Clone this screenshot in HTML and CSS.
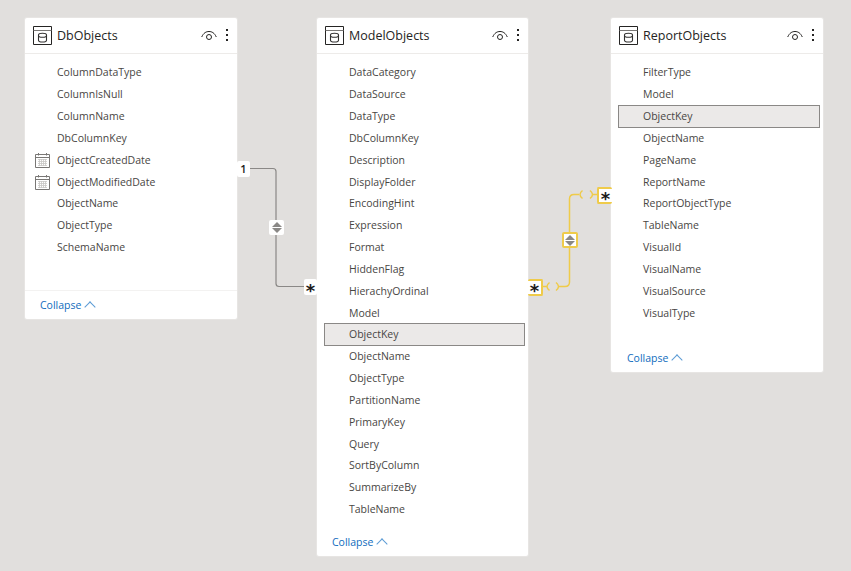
FILE: index.html
```html
<!DOCTYPE html>
<html lang="en">
<head>
    <meta charset="UTF-8">
    <title>Model view</title>
    <link rel="stylesheet" href="styles.css">
</head>
<body>
    <svg width="0" height="0" class="defs">
        <defs>
            <symbol id="tableIcon" viewBox="0 0 20 19">
                <path d="M.5.5h18v18H.5z" fill="none" stroke="#252423"/>
                <path d="M.5 4.500h18" fill="none" stroke="#797775"/>
                <path d="M5.500 9c0-1.200 1.600-1.800 4-1.800s4 .6 4 1.800v5.200c0 1.200-1.600 1.800-4 1.800s-4-.6-4-1.800zM5.500 9.500c0 1.200 1.600 1.800 4 1.800s4-.6 4-1.800" fill="none" stroke="#323130" stroke-width="1.100"/>
            </symbol>
            <symbol id="eyeIcon" viewBox="0 0 16 11">
                <path d="M.7 7C2.500 3 5 1.500 8 1.500S13.500 3 15.300 7" fill="none" stroke="#252423"/>
                <circle cx="8" cy="7" r="2.500" fill="none" stroke="#252423"/>
            </symbol>
            <symbol id="dateIcon" viewBox="0 0 15 15">
                <path d="M.5 1.500h14v13H.5zM.5 4.500h14M3.500 0v2.500M11.500 0v2.500" fill="none" stroke="#797775"/>
                <path d="M3 6.500h9M3 8.500h9M3 10.500h9M3 12.500h9M4.500 6v7M6.500 6v7M8.500 6v7M10.500 6v7" fill="none" stroke="#c8c6c4" stroke-width=".8"/>
            </symbol>
        </defs>
    </svg>

    <div class="canvas">
        <svg class="links" width="851" height="571">
            <path class="link" d="M250 168.500h23q3 0 3 3v112q0 3 3 3h26"/>
            <path class="link link-on" d="M543 286.500h4M558 286.500h7q4.500 0 4.500-4.500V199q0-4.500 4.500-4.500h5M592 194.500h6"/>
            <path class="link link-on" d="M549.500 282.500q-5 4 0 8M556 282.500q5 4 0 8M582.500 190.500q-5 4 0 8M590 190.500q5 4 0 8"/>
        </svg>

        <span class="tag tag-one">1</span>
        <span class="tag tag-star tag-many-a">*</span>
        <span class="tag tag-star tag-on tag-many-b">*</span>
        <span class="tag tag-star tag-on tag-many-c">*</span>
        <span class="filter"><i class="up"></i><i class="down"></i></span>
        <span class="filter filter-on"><i class="up"></i><i class="down"></i></span>

        <section class="card card-db">
            <header class="card-head">
                <svg class="table-icon"><use href="#tableIcon"/></svg>
                <h2>DbObjects</h2>
                <svg class="eye-icon"><use href="#eyeIcon"/></svg>
                <span class="more"><i></i><i></i><i></i></span>
            </header>
            <ul class="fields">
                <li>ColumnDataType</li>
                <li>ColumnIsNull</li>
                <li>ColumnName</li>
                <li>DbColumnKey</li>
                <li><svg class="date-icon"><use href="#dateIcon"/></svg>ObjectCreatedDate</li>
                <li><svg class="date-icon"><use href="#dateIcon"/></svg>ObjectModifiedDate</li>
                <li>ObjectName</li>
                <li>ObjectType</li>
                <li>SchemaName</li>
            </ul>
            <footer class="card-foot">Collapse <span class="chevron"></span></footer>
        </section>

        <section class="card card-model">
            <header class="card-head">
                <svg class="table-icon"><use href="#tableIcon"/></svg>
                <h2>ModelObjects</h2>
                <svg class="eye-icon"><use href="#eyeIcon"/></svg>
                <span class="more"><i></i><i></i><i></i></span>
            </header>
            <ul class="fields">
                <li>DataCategory</li>
                <li>DataSource</li>
                <li>DataType</li>
                <li>DbColumnKey</li>
                <li>Description</li>
                <li>DisplayFolder</li>
                <li>EncodingHint</li>
                <li>Expression</li>
                <li>Format</li>
                <li>HiddenFlag</li>
                <li>HierachyOrdinal</li>
                <li>Model</li>
                <li class="selected">ObjectKey</li>
                <li>ObjectName</li>
                <li>ObjectType</li>
                <li>PartitionName</li>
                <li>PrimaryKey</li>
                <li>Query</li>
                <li>SortByColumn</li>
                <li>SummarizeBy</li>
                <li>TableName</li>
            </ul>
            <footer class="card-foot no-line">Collapse <span class="chevron"></span></footer>
        </section>

        <section class="card card-report">
            <header class="card-head">
                <svg class="table-icon"><use href="#tableIcon"/></svg>
                <h2>ReportObjects</h2>
                <svg class="eye-icon"><use href="#eyeIcon"/></svg>
                <span class="more"><i></i><i></i><i></i></span>
            </header>
            <ul class="fields">
                <li>FilterType</li>
                <li>Model</li>
                <li class="selected">ObjectKey</li>
                <li>ObjectName</li>
                <li>PageName</li>
                <li>ReportName</li>
                <li>ReportObjectType</li>
                <li>TableName</li>
                <li>VisualId</li>
                <li>VisualName</li>
                <li>VisualSource</li>
                <li>VisualType</li>
            </ul>
            <footer class="card-foot no-line">Collapse <span class="chevron"></span></footer>
        </section>
    </div>
</body>
</html>
```

FILE: styles.css
```css
html, body {
    margin: 0;
    height: 100%;
    overflow: hidden;
}
body {
    background: #e1dfdd;
    font-family: "Open Sans", "Noto Sans", sans-serif;
}
.defs {
    display: block;
}
.canvas {
    position: relative;
    width: 851px;
    height: 571px;
}
.links {
    position: absolute;
    left: 0;
    top: 0;
}
.link {
    fill: none;
    stroke: #8a8886;
    stroke-width: 1.2;
}
.link-on {
    stroke: #efcb4a;
    stroke-width: 1.5;
}

/* table cards sit on the free diagram canvas */
.card {
    position: absolute;
    top: 18px;
    width: 212px;
    background: #fff;
    border-radius: 2px;
    box-shadow: 0 0 0 1px rgba(255, 255, 255, .2);
    display: flex;
    flex-direction: column;
}
.card-db {
    left: 25px;
    height: 301px;
}
.card-model {
    left: 317px;
    width: 211px;
    height: 538px;
}
.card-report {
    left: 611px;
    height: 354px;
}
.card-head {
    height: 36px;
    box-sizing: border-box;
    border-bottom: 1px solid #edebe9;
    display: flex;
    align-items: center;
    padding: 0 9px 1px 8px;
}
.card-head h2 {
    flex: 1;
    margin: 0;
    padding-left: 4px;
    font-size: 12.500px;
    font-weight: 500;
    color: #252423;
}
.table-icon {
    width: 20px;
    height: 19px;
}
.eye-icon {
    width: 16px;
    height: 11px;
    margin-right: 9px;
}
.more {
    display: flex;
    flex-direction: column;
    gap: 3px;
}
.more i {
    display: block;
    width: 2px;
    height: 2px;
    background: #252423;
}
.fields {
    flex: 1;
    list-style: none;
    margin: 0;
    padding: 8.300px 0 0;
}
.fields li {
    position: relative;
    height: 21.850px;
    line-height: 21.850px;
    padding-left: 32px;
    font-size: 10.500px;
    color: #484644;
    box-sizing: border-box;
    white-space: nowrap;
}
.fields li.selected {
    height: 22.850px;
    margin: -1px 3px 0 7px;
    padding-left: 24px;
    line-height: 20.850px;
    background: #ebe9e8;
    border: 1px solid #8a8886;
}
.date-icon {
    position: absolute;
    left: 10px;
    top: 3px;
    width: 15px;
    height: 15px;
}
.card-foot {
    height: 29px;
    box-sizing: border-box;
    border-top: 1px solid #f3f2f1;
    padding-left: 15px;
    line-height: 28px;
    font-size: 10.500px;
    color: #0f6cbd;
}
.no-line {
    border-top-color: transparent;
}
.card-report .card-foot {
    padding-left: 16px;
}
.chevron {
    display: inline-block;
    width: 7px;
    height: 7px;
    margin: 0 0 -2px 2px;
    border-left: 1px solid #5b9bd5;
    border-top: 1px solid #5b9bd5;
    transform: rotate(45deg);
}

/* cardinality tags and cross filter markers, over the link lines */
.tag {
    position: absolute;
    width: 13px;
    height: 16px;
    background: #fff;
    color: #1b1a19;
    font-size: 11px;
    font-weight: 600;
    line-height: 16px;
    text-align: center;
    z-index: 1;
    border-radius: 2px;
}
.tag-star {
    font-family: "DejaVu Sans", sans-serif;
    font-size: 18px;
    font-weight: 700;
    line-height: 24px;
}
.tag-one {
    left: 237px;
    top: 161px;
}
.tag-many-a {
    left: 304px;
    top: 279px;
}
.tag-on {
    box-sizing: border-box;
    height: 17px;
    border: 2px solid #efcb4a;
    line-height: 20px;
}
.tag-many-b {
    left: 528px;
    top: 279px;
    width: 15px;
    border-left: 0;
}
.tag-many-c {
    left: 597px;
    top: 187px;
    width: 15px;
    border-right: 0;
}
.filter {
    position: absolute;
    left: 269px;
    top: 220px;
    width: 15px;
    height: 15px;
    background: #fff;
    border-radius: 2px;
    display: flex;
    flex-direction: column;
    align-items: center;
    justify-content: center;
    gap: 1px;
}
.filter-on {
    left: 562px;
    top: 232px;
    box-sizing: border-box;
    width: 16px;
    height: 16px;
    border: 2px solid #efcb4a;
}
.up, .down {
    width: 0;
    height: 0;
    border-left: 5px solid transparent;
    border-right: 5px solid transparent;
}
.up {
    border-bottom: 5px solid #8a8886;
}
.down {
    border-top: 5px solid #8a8886;
}
```
